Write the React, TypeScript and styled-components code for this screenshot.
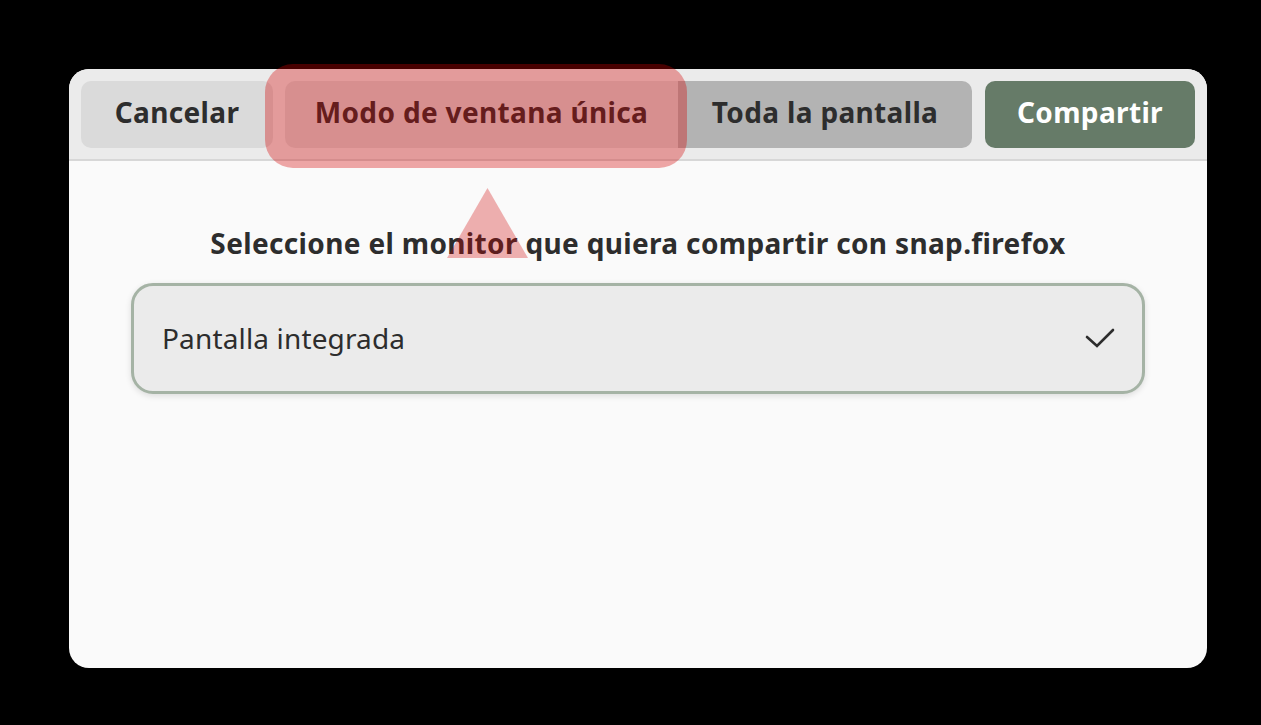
import React from 'react'
import styled, { createGlobalStyle } from 'styled-components'

const GlobalStyle = createGlobalStyle`
  html, body {
    margin: 0;
    padding: 0;
    background: #000;
    font-family: "Noto Sans", "Open Sans", sans-serif;
  }
  #root {
    min-height: 725px;
  }
`

const Screen = styled.div`
  width: 1261px;
  height: 725px;
  padding: 69px 0 0 69px;
  box-sizing: border-box;
  background: #000;
`

const Dialog = styled.div`
  position: relative;
  width: 1138px;
  height: 599px;
  border-radius: 20px;
  background: #fafafa;
  display: flex;
  flex-direction: column;
`

const HeaderBar = styled.div`
  display: flex;
  align-items: center;
  gap: 12px;
  padding: 12px 12px 11px 12px;
  background: #ebebeb;
  border-bottom: 2px solid #d7d7d7;
  border-radius: 20px 20px 0 0;
`

const Button = styled.button<{ $variant?: 'plain' | 'suggested' }>`
  height: 67px;
  border: none;
  border-radius: 10px;
  padding: 0 10px 5px 10px;
  font-family: inherit;
  font-size: 28px;
  font-weight: 700;
  letter-spacing: 0.35px;
  background: ${p => (p.$variant === 'suggested' ? '#667b68' : '#dadada')};
  color: ${p => (p.$variant === 'suggested' ? '#ffffff' : '#2d2d2d')};
  cursor: pointer;
`

const ToggleGroup = styled.div`
  display: flex;
  flex: 1;
`

const ToggleButton = styled(Button)<{ $active?: boolean; $w: number }>`
  width: ${p => p.$w}px;
  background: ${p => (p.$active ? '#b3b3b3' : '#dadada')};
  border-radius: 0;
  &:first-child {
    border-radius: 10px 0 0 10px;
  }
  &:last-child {
    border-radius: 0 10px 10px 0;
  }
`

const Content = styled.div`
  display: flex;
  flex-direction: column;
  align-items: center;
  padding: 64px 62px 0 62px;
`

const Heading = styled.h2`
  margin: 0 0 22px 0;
  font-size: 28px;
  line-height: 36px;
  font-weight: 700;
  color: #2d2d2d;
  letter-spacing: 0.35px;
`

const ListRow = styled.div`
  align-self: stretch;
  display: flex;
  align-items: center;
  justify-content: space-between;
  height: 111px;
  box-sizing: border-box;
  padding: 0 26px 2px 28px;
  border: 3px solid #a5b3a5;
  border-radius: 22px;
  background: #ebebeb;
  box-shadow: 0 2px 6px rgba(0, 0, 0, 0.12);
`

const RowLabel = styled.span`
  font-size: 28px;
  letter-spacing: 0.15px;
  color: #2d2d2d;
`

const Highlight = styled.div`
  position: absolute;
  left: 196px;
  top: -5px;
  width: 422px;
  height: 104px;
  border-radius: 28px;
  background: rgba(210, 0, 0, 0.34);
  pointer-events: none;
`

const Pointer = styled.div`
  position: absolute;
  left: 378px;
  top: 119px;
  width: 81px;
  height: 70px;
  background: rgba(210, 0, 0, 0.3);
  clip-path: polygon(50% 0, 100% 100%, 0 100%);
  pointer-events: none;
`

function Check() {
  return (
    <svg width="32" height="24" viewBox="0 0 32 24">
      <polyline
        points="3,11 13,20 29,4"
        fill="none"
        stroke="#2d2d2d"
        strokeWidth="2.6"
        strokeLinecap="round"
        strokeLinejoin="miter"
      />
    </svg>
  )
}

export default function App() {
  return (
    <Screen>
      <GlobalStyle />
      <Dialog>
        <HeaderBar>
          <Button style={{ width: 192 }}>Cancelar</Button>
          <ToggleGroup>
            <ToggleButton $w={393}>Modo de ventana única</ToggleButton>
            <ToggleButton $w={294} $active>Toda la pantalla</ToggleButton>
          </ToggleGroup>
          <Button $variant="suggested" style={{ width: 210 }}>Compartir</Button>
        </HeaderBar>
        <Content>
          <Heading>Seleccione el monitor que quiera compartir con snap.firefox</Heading>
          <ListRow>
            <RowLabel>Pantalla integrada</RowLabel>
            <Check />
          </ListRow>
        </Content>
        <Highlight />
        <Pointer />
      </Dialog>
    </Screen>
  )
}
